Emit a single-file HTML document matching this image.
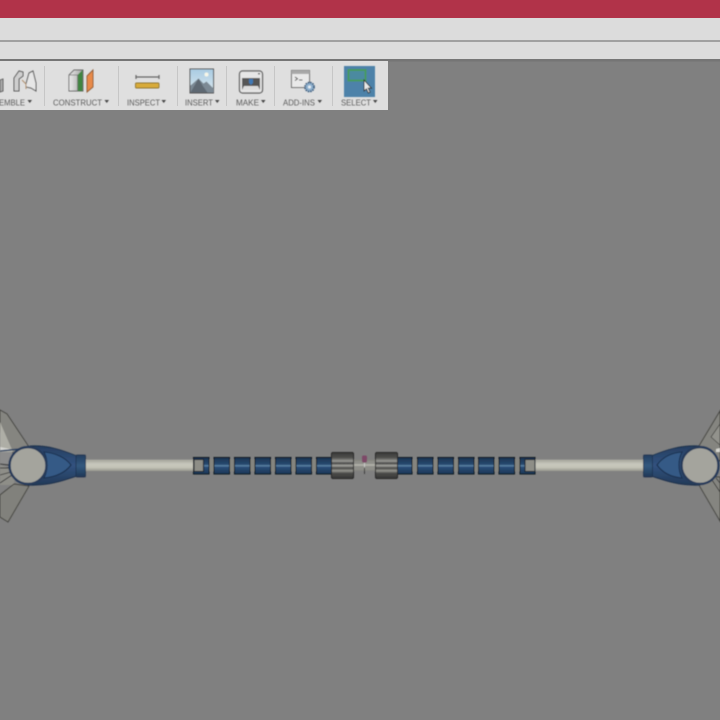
<!DOCTYPE html>
<html>
<head>
<meta charset="utf-8">
<style>
html,body{margin:0;padding:0;background:#808080;width:720px;height:720px;overflow:hidden}
svg{display:block;position:absolute;left:0;top:0}
text{font-family:"Liberation Sans",sans-serif;font-size:8.5px;fill:#5a5a5a}
</style>
</head>
<body>
<svg width="720" height="720" viewBox="0 0 720 720" xmlns="http://www.w3.org/2000/svg">
<defs>
<filter id="b" x="-5%" y="-5%" width="110%" height="110%"><feGaussianBlur stdDeviation="0.55"/></filter>
<linearGradient id="rod" x1="0" y1="0" x2="0" y2="1"><stop offset="0" stop-color="#a2a29a"/><stop offset=".4" stop-color="#c8c8bc"/><stop offset=".7" stop-color="#c2c2b6"/><stop offset="1" stop-color="#97978f"/></linearGradient>
<linearGradient id="seg" x1="0" y1="0" x2="0" y2="1"><stop offset="0" stop-color="#1b3452"/><stop offset=".42" stop-color="#27496f"/><stop offset=".5" stop-color="#5f86a8"/><stop offset=".58" stop-color="#2a4e78"/><stop offset="1" stop-color="#1c3755"/></linearGradient>
<linearGradient id="body" x1="0" y1="0" x2="0" y2="1"><stop offset="0" stop-color="#273f61"/><stop offset=".5" stop-color="#31527f"/><stop offset="1" stop-color="#223957"/></linearGradient>
<linearGradient id="cap" x1="0" y1="0" x2="0" y2="1"><stop offset="0" stop-color="#243e60"/><stop offset=".5" stop-color="#33597f"/><stop offset="1" stop-color="#1f3756"/></linearGradient>
<linearGradient id="grip" x1="0" y1="0" x2="0" y2="1"><stop offset="0" stop-color="#3a3a38"/><stop offset=".2" stop-color="#50504e"/><stop offset=".33" stop-color="#9a9a95"/><stop offset=".42" stop-color="#444"/><stop offset=".5" stop-color="#a8a8a2"/><stop offset=".6" stop-color="#4a4a48"/><stop offset=".7" stop-color="#96968f"/><stop offset=".8" stop-color="#4b4b49"/><stop offset="1" stop-color="#383836"/></linearGradient>
<linearGradient id="sky" x1="0" y1="0" x2="0" y2="1"><stop offset="0" stop-color="#a9cbe2"/><stop offset="1" stop-color="#dbe8ee"/></linearGradient>
<linearGradient id="cube" x1="0" y1="0" x2="1" y2="0"><stop offset="0" stop-color="#ececec"/><stop offset="1" stop-color="#a2a2a2"/></linearGradient>
</defs>

<!-- window chrome -->
<rect width="720" height="720" fill="#808080"/>
<rect width="720" height="18" fill="#b13349"/>
<rect y="18" width="720" height="23" fill="#dcdcdc"/>
<rect y="40" width="720" height="2" fill="#a0a0a0"/>
<rect y="42" width="720" height="17" fill="#dcdcdc"/>
<rect y="59" width="720" height="2.5" fill="#757575"/>

<!-- toolbar -->
<rect y="61" width="388" height="49" fill="#dfdfdf"/>
<g fill="#c6c6c6">
<rect x="44" y="66" width="1" height="40"/><rect x="118" y="66" width="1" height="40"/><rect x="177" y="66" width="1" height="40"/><rect x="226" y="66" width="1" height="40"/><rect x="274" y="66" width="1" height="40"/><rect x="332" y="66" width="1" height="40"/>
</g>

<g filter="url(#b)">
<!-- assemble icons -->
<path d="M0 80l3-1v12l-3 1z" fill="#a9a9a9" stroke="#555" stroke-width=".9"/>
<path d="M14 91V78l5-7 4 1v4l-4 3v12z" fill="#cfcfcf" stroke="#555" stroke-width="1"/>
<path d="M26 84l3-11 4-2 3 12v8l-5-3-5-1z" fill="#e6e6e6" stroke="#555" stroke-width="1"/>
<path d="M22 80l4 4v5" fill="none" stroke="#b08f6c" stroke-width="1"/>

<!-- construct -->
<path d="M69 75l5-5h9v21H69z" fill="url(#cube)" stroke="#666" stroke-width=".9"/>
<path d="M77.500 75l5-5v21h-5z" fill="#3f8540"/>
<path d="M69 75h8.500v16" fill="none" stroke="#777" stroke-width=".8"/>
<path d="M87 76l6-6v17l-6 5z" fill="#e88a49" stroke="#8f5a34" stroke-width=".9"/>

<!-- inspect -->
<path d="M136 77h23" stroke="#666" stroke-width="1.200"/>
<path d="M136 75v4M159 75v4" stroke="#666" stroke-width="1.200"/>
<rect x="135.500" y="83" width="23.500" height="5" rx="1" fill="#d8ab38" stroke="#8f7430" stroke-width=".9"/>

<!-- insert -->
<rect x="190" y="69" width="23.500" height="24" fill="url(#sky)" stroke="#555" stroke-width="1"/>
<circle cx="206.500" cy="74.500" r="2" fill="#f7f7e8"/>
<path d="M190.500 92.500v-7l8-7 5 5 3-2 7 7v4z" fill="#7c8994"/>
<path d="M190.500 92.500l8-14 4 7 5 7z" fill="#5e6973"/>

<!-- make -->
<rect x="239.500" y="71" width="23" height="22" rx="3" fill="#e6e6e6" stroke="#555" stroke-width="1.200"/>
<rect x="242" y="78" width="18" height="12" fill="#555"/>
<path d="M244 86h14l2 4h-18z" fill="#dcdcdc"/>
<path d="M249 79h4v4l-2 2-2-2z" fill="#3f79b5"/>
<rect x="258" y="73" width="2" height="1.500" fill="#666"/>

<!-- add-ins -->
<rect x="291.500" y="70.500" width="18" height="17" fill="#e9e9e9" stroke="#666" stroke-width="1"/>
<rect x="291.500" y="70.500" width="18" height="3.500" fill="#a9a9a9"/>
<path d="M295 77l2.500 1.800-2.500 1.800M299 80h3.500" fill="none" stroke="#444" stroke-width=".9"/>
<circle cx="309.500" cy="87" r="4.500" fill="#8fb1cf" stroke="#3d5f80" stroke-width="1.800" stroke-dasharray="1.600 .8"/>
<circle cx="309.500" cy="87" r="1.500" fill="#e8eef3"/>

<!-- select -->
<rect x="344" y="66" width="31" height="31" fill="#4d82a9"/>
<rect x="348.500" y="70" width="17" height="10.500" fill="#4c8aa0" stroke="#469a5e" stroke-width="2"/>
<path d="M364 80v11l2.500-2 1.800 4 1.800-.8-1.800-4h3.200z" fill="#e9e9e9" stroke="#2a2a2a" stroke-width=".9"/>

<!-- labels -->
<text x="-1" y="105.300" textLength="26" lengthAdjust="spacingAndGlyphs">EMBLE</text>
<text x="53" y="105.300" textLength="49" lengthAdjust="spacingAndGlyphs">CONSTRUCT</text>
<text x="127" y="105.300" textLength="33" lengthAdjust="spacingAndGlyphs">INSPECT</text>
<text x="185" y="105.300" textLength="28" lengthAdjust="spacingAndGlyphs">INSERT</text>
<text x="236" y="105.300" textLength="23" lengthAdjust="spacingAndGlyphs">MAKE</text>
<text x="283" y="105.300" textLength="32" lengthAdjust="spacingAndGlyphs">ADD-INS</text>
<text x="341" y="105.300" textLength="30" lengthAdjust="spacingAndGlyphs">SELECT</text>
<g fill="#444">
<path d="M27.500 100h4.500l-2.250 3z"/><path d="M104.500 100h4.500l-2.250 3z"/><path d="M161.500 100h4.500l-2.250 3z"/><path d="M215 100h4.500l-2.250 3z"/><path d="M261 100h4.500l-2.250 3z"/><path d="M317.500 100h4.500l-2.250 3z"/><path d="M373 100h4.500l-2.250 3z"/>
</g>

<!-- rods -->
<rect x="85" y="459.500" width="115" height="11.500" fill="url(#rod)"/>
<rect x="528" y="459.500" width="118" height="11.500" fill="url(#rod)"/>
<rect x="200" y="459.500" width="330" height="11.500" fill="#85857f"/>
<rect x="353" y="461" width="22" height="9" fill="#8f8f89"/>
<rect x="353" y="464" width="22" height="2" fill="#adada5"/>

<!-- segments -->
<g fill="url(#seg)" stroke="#10161e" stroke-width="1">
<rect x="193.500" y="457.500" width="15.500" height="16.500"/>
<rect x="214" y="457.500" width="15.500" height="16.500"/>
<rect x="234.500" y="457.500" width="15.500" height="16.500"/>
<rect x="255" y="457.500" width="15.500" height="16.500"/>
<rect x="275.500" y="457.500" width="15.500" height="16.500"/>
<rect x="296" y="457.500" width="15.500" height="16.500"/>
<rect x="316.500" y="457.500" width="15" height="16.500"/>
<rect x="397" y="457.500" width="15" height="16.500"/>
<rect x="417.500" y="457.500" width="15.500" height="16.500"/>
<rect x="438" y="457.500" width="15.500" height="16.500"/>
<rect x="458.500" y="457.500" width="15.500" height="16.500"/>
<rect x="478.500" y="457.500" width="15.500" height="16.500"/>
<rect x="499" y="457.500" width="15.500" height="16.500"/>
<rect x="520" y="457.500" width="15" height="16.500"/>
</g>
<rect x="194" y="459.500" width="9.500" height="12" fill="#8e8e87" stroke="#1a2533" stroke-width="1.100"/>
<rect x="525" y="459.500" width="10" height="12" fill="#8e8e87" stroke="#1a2533" stroke-width="1.100"/>

<!-- grips -->
<rect x="331.500" y="452.500" width="22" height="26" rx="1.500" fill="url(#grip)" stroke="#262626" stroke-width="1"/>
<rect x="375.500" y="452.500" width="22" height="26" rx="1.500" fill="url(#grip)" stroke="#262626" stroke-width="1"/>

<!-- pink marker -->
<rect x="362" y="455.500" width="5" height="7" rx="1.500" fill="#7d4a68"/>
<path d="M364.500 463v4" stroke="#c8c8c8" stroke-width="1"/>
<path d="M364.500 468v6" stroke="#3c3c3c" stroke-width="1"/>

<!-- left head fins -->
<path d="M0 410l7 4 22 33-16 6L0 432z" fill="#858580" stroke="#3f3f3b" stroke-width=".9"/>
<path d="M0 422l13 30-13 0z" fill="#aeaea6"/>
<path d="M0 447l10 2-2 2H0z" fill="#d6d6d2"/>
<path d="M0 451l40-4" stroke="#2b4263" stroke-width="1.500"/>
<path d="M0 452h12v13H0z" fill="#8c8c8c"/>
<path d="M0 465v20h14l1-15z" fill="#8e8e88"/>
<path d="M0 464l10 1M0 468l10 0M0 475l11-3M0 483l12-8" stroke="#333" stroke-width=".9" fill="none"/>
<path d="M14 484l15 2-21 36-8-5v-22z" fill="#81817c" stroke="#3f3f3b" stroke-width=".9"/>

<!-- left head body -->
<path d="M30 446C48 445 62 450 77 456V476C62 481 48 486 28 485z" fill="url(#body)" stroke="#1c2f4a" stroke-width=".9"/>
<path d="M44 452C56 453 66 458 71 465C66 472 56 477 44 478C48 470 48 460 44 452z" fill="#345a86" stroke="#1c3150" stroke-width="1.100"/>
<rect x="76" y="455" width="9.500" height="22" rx="1" fill="url(#cap)" stroke="#1c2f4a" stroke-width=".7"/>
<circle cx="28" cy="465.500" r="18.500" fill="#a4a49d" stroke="#263b5a" stroke-width="2.400"/>

<!-- right head fins -->
<path d="M699 446l21-35v50l-14-8z" fill="#858580" stroke="#3f3f3b" stroke-width=".9"/>
<path d="M711 437l9-13v21z" fill="#92928c" stroke="#3f3f3b" stroke-width=".7"/>
<path d="M716 449l4-1v4h-4z" fill="#d6d6d0"/>
<path d="M699 485l21 36v-44h-8z" fill="#858580" stroke="#3f3f3b" stroke-width=".9"/>
<path d="M712 480l8 12M716 478l4 5" stroke="#333" stroke-width=".8" fill="none"/>

<!-- right head body -->
<path d="M699 446C680 445 666 450 651 456V476C666 481 680 486 700 485z" fill="url(#body)" stroke="#1c2f4a" stroke-width=".9"/>
<path d="M682 452C670 453 662 458 657 465C662 472 670 477 682 478C678 470 678 460 682 452z" fill="#345a86" stroke="#1c3150" stroke-width="1.100"/>
<rect x="643.500" y="455" width="9" height="22" rx="1" fill="url(#cap)" stroke="#1c2f4a" stroke-width=".7"/>
<circle cx="700" cy="465.500" r="18.500" fill="#a4a49d" stroke="#263b5a" stroke-width="2.400"/>
</g>
</svg>
</body>
</html>
